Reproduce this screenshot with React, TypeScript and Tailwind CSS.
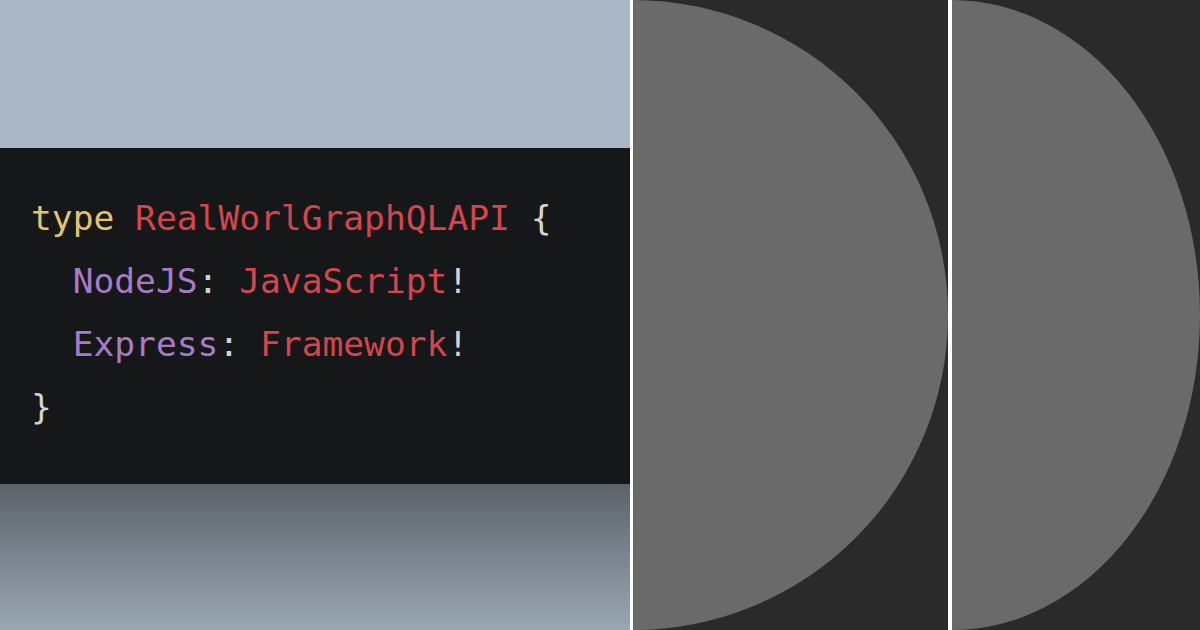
import React from "react";

const mono = { fontFamily: '"DejaVu Sans Mono", "Liberation Mono", monospace' };

const CodeBlock = () => (
  <div
    className="h-[336px] bg-[#161719] pl-[31px] pt-[39px] text-[34.6px] leading-[63px] text-[#d4d4d4] whitespace-pre"
    style={mono}
  >
    <div>
      <span className="text-[#e3c46f]">type</span> <span className="text-[#d3464e]">RealWorlGraphQLAPI</span> {"{"}
    </div>
    <div>
      {"  "}
      <span className="text-[#a77bc8]">NodeJS</span>: <span className="text-[#d3464e]">JavaScript</span>!
    </div>
    <div>
      {"  "}
      <span className="text-[#a77bc8]">Express</span>: <span className="text-[#d3464e]">Framework</span>!
    </div>
    <div>{"}"}</div>
  </div>
);

// half ellipse hugging the left edge of each dark panel
const HalfMoon = () => (
  <div className="h-full bg-[#2a2a2a]">
    <div className="h-full w-full bg-[#6a6a6a] rounded-[0_100%_100%_0/0_50%_50%_0]" />
  </div>
);

export default function App() {
  return (
    <div className="flex h-[630px] w-[1200px] overflow-hidden bg-white">
      <div className="flex w-[630px] flex-col">
        <div className="h-[148px] bg-[#aab7c4]" />
        <CodeBlock />
        <div className="flex-1 bg-gradient-to-b from-[#5b626a] via-[#7b858f] to-[#9aa6b1]" />
      </div>
      <div className="w-[3px] bg-white" />
      <div className="w-[315px]">
        <HalfMoon />
      </div>
      <div className="w-[4px] bg-white" />
      <div className="flex-1">
        <HalfMoon />
      </div>
    </div>
  );
}
